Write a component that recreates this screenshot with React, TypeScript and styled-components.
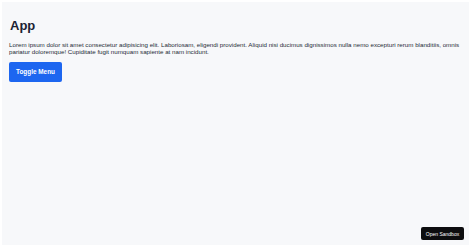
import React from "react";
import styled, { createGlobalStyle } from "styled-components";

const Global = createGlobalStyle`
  html, body { margin: 0; padding: 0; background: #ffffff; }
  body { font-family: "Liberation Sans", Arial, Helvetica, sans-serif; }
  * { box-sizing: border-box; }
`;

const Frame = styled.div`
  margin: 2px 5px 0 2px;
  height: 243px;
  background: #f7f8fa;
  position: relative;
  padding: 16px 7px 0 7px;
`;

const Title = styled.h1`
  margin: 0 0 0 1px;
  font-size: 13px;
  line-height: 15px;
  font-weight: 700;
  color: #1c2333;
`;

const Text = styled.p`
  margin: 8px 0 0 0;
  font-size: 6.2px;
  line-height: 7.4px;
  color: #262b36;
`;

const ToggleButton = styled.button`
  margin-top: 6px;
  display: block;
  width: 53px;
  height: 20px;
  border: none;
  border-radius: 2px;
  background: #1d66f0;
  color: #ffffff;
  font-family: "Liberation Sans", Arial, sans-serif;
  font-size: 6.4px;
  font-weight: 700;
  padding: 0;
  cursor: pointer;
`;

const SandboxButton = styled.button`
  position: absolute;
  right: 5px;
  bottom: 5px;
  width: 43px;
  height: 13px;
  border: none;
  border-radius: 2px;
  background: #0d0d0f;
  color: #ffffff;
  font-family: "Liberation Sans", Arial, sans-serif;
  font-size: 5px;
  padding: 0;
`;

export default function App() {
  return (
    <>
      <Global />
      <Frame>
        <Title>App</Title>
        <Text>
          Lorem ipsum dolor sit amet consectetur adipisicing elit. Laboriosam, eligendi provident. Aliquid nisi
          ducimus dignissimos nulla nemo excepturi rerum blanditiis, omnis pariatur doloremque! Cupiditate fugit
          numquam sapiente at nam incidunt.
        </Text>
        <ToggleButton>Toggle Menu</ToggleButton>
        <SandboxButton>Open Sandbox</SandboxButton>
      </Frame>
    </>
  );
}
